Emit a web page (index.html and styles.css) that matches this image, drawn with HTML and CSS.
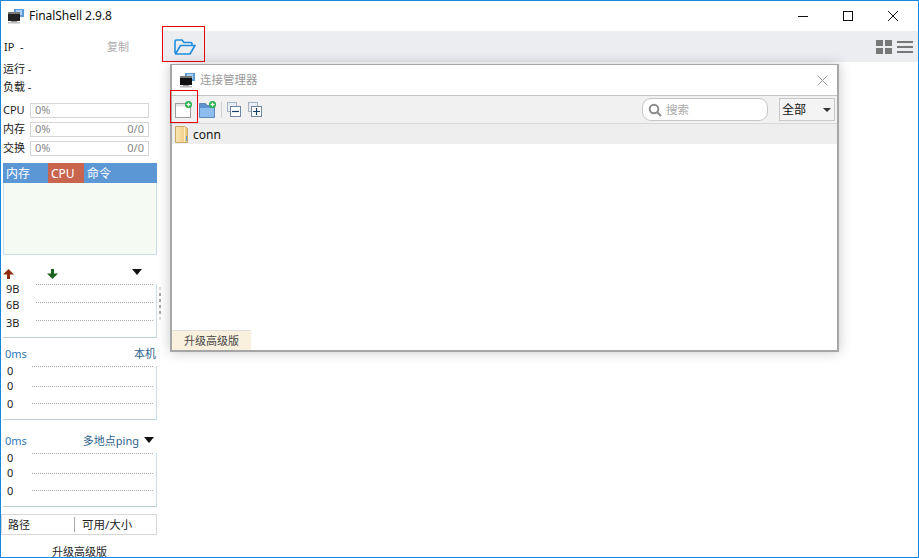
FILE: index.html
```html
<!DOCTYPE html>
<html lang="zh">
<head>
<meta charset="utf-8">
<title>FinalShell 2.9.8</title>
<link rel="stylesheet" href="styles.css">
</head>
<body>
<div class="window">
  <header class="titlebar">
    <svg class="app-icon" width="17" height="15" viewBox="0 0 17 15"><rect x="7" y="0" width="10" height="8" fill="#5b9bd8"/><rect x="9" y="1" width="6" height="5" fill="#a9d0f2"/><rect x="1" y="3" width="12" height="9" fill="#222"/><rect x="1" y="3" width="12" height="2" fill="#777"/><rect x="4" y="12" width="6" height="1" fill="#999"/><rect x="1" y="13" width="12" height="1.500" fill="#bbb"/></svg>
    <span class="app-title">FinalShell 2.9.8</span>
    <div class="win-controls">
      <svg width="12" height="12" viewBox="0 0 12 12"><path d="M1 6.500h10" stroke="#111" fill="none"/></svg>
      <svg width="12" height="12" viewBox="0 0 12 12"><rect x="1.500" y="1.500" width="9" height="9" stroke="#111" fill="none"/></svg>
      <svg width="12" height="12" viewBox="0 0 12 12"><path d="M1 1l10 10M11 1L1 11" stroke="#111" fill="none"/></svg>
    </div>
  </header>
  <div class="main">
    <aside class="sidebar">
      <div class="row ip-row"><span>IP&nbsp;&nbsp;-</span><span class="copy">复制</span></div>
      <div class="row info-row">运行 -</div>
      <div class="row info-row">负载 -</div>
      <div class="meters">
        <div class="meter"><span class="meter-label">CPU</span><div class="bar"><span>0%</span></div></div>
        <div class="meter"><span class="meter-label">内存</span><div class="bar"><span>0%</span><span>0/0</span></div></div>
        <div class="meter"><span class="meter-label">交换</span><div class="bar"><span>0%</span><span>0/0</span></div></div>
      </div>
      <section class="proc">
        <div class="proc-tabs"><span class="tab tab-mem">内存</span><span class="tab tab-cpu">CPU</span><span class="tab">命令</span></div>
        <div class="proc-body"></div>
      </section>
      <div class="net-head">
        <svg width="11" height="10" viewBox="0 0 11 10"><path d="M5.500 0L11 5.500H7V10H4V5.500H0z" fill="#8f2f10"/></svg>
        <svg class="arrow-down" width="11" height="10" viewBox="0 0 11 10"><path d="M5.500 10L11 4.500H7V0H4V4.500H0z" fill="#1d6320"/></svg>
        <svg class="caret" width="10" height="6" viewBox="0 0 10 6"><path d="M0 0h10L5 6z" fill="#111"/></svg>
      </div>
      <div class="chart chart-net">
        <div class="tick"><span>9B</span><i></i></div>
        <div class="tick"><span>6B</span><i></i></div>
        <div class="tick"><span>3B</span><i></i></div>
      </div>
      <div class="ping-head first"><span class="ms">0ms</span><span class="ping-name">本机</span></div>
      <div class="chart chart-ping">
        <div class="tick"><span>0</span><i></i></div>
        <div class="tick"><span>0</span><i></i></div>
        <div class="tick"><span>0</span><i></i></div>
      </div>
      <div class="ping-head second"><span class="ms">0ms</span><span class="ping-name">多地点ping<svg class="caret-ping" width="10" height="6" viewBox="0 0 10 6"><path d="M0 0h10L5 6z" fill="#111"/></svg></span></div>
      <div class="chart chart-ping">
        <div class="tick"><span>0</span><i></i></div>
        <div class="tick"><span>0</span><i></i></div>
        <div class="tick"><span>0</span><i></i></div>
      </div>
      <div class="disk-head"><span class="disk-path">路径</span><span class="disk-size">可用/大小</span></div>
      <div class="upgrade-side">升级高级版</div>
    </aside>
    <div class="splitter"><i class="faint"></i><i></i><i></i><i></i><i></i><i class="faint"></i></div>
    <main class="content">
      <div class="toolbar">
        <svg class="open-folder" width="22" height="16" viewBox="0 0 22 16"><path d="M1 14V2.500Q1 1 2.500 1H8l2 2.500h7Q18 3.500 18 5V6.500H6.500L1.500 15h14.500l5-8.500H18" fill="none" stroke="#1f8ee0" stroke-width="1.600" stroke-linejoin="round"/></svg>
        <div class="view-icons">
          <svg width="16" height="14" viewBox="0 0 16 14"><path d="M0 0h7v6H0zM9 0h7v6H9zM0 8h7v6H0zM9 8h7v6H9z" fill="#777"/></svg>
          <svg width="16" height="14" viewBox="0 0 16 14"><path d="M0 1h16v2H0zM0 6h16v2H0zM0 11h16v2H0z" fill="#777"/></svg>
        </div>
      </div>
    </main>
  </div>

  <div class="highlight hl-open"></div>

  <section class="dialog">
    <div class="dlg-title">
      <svg width="17" height="15" viewBox="0 0 17 15"><rect x="6" y="0" width="10" height="8" fill="#5b9bd8"/><rect x="8" y="1" width="6" height="5" fill="#a9d0f2"/><rect x="1" y="3" width="12" height="9" fill="#111"/><rect x="1" y="3" width="12" height="2" fill="#777"/><rect x="4" y="12" width="6" height="1" fill="#999"/><rect x="1" y="13" width="12" height="1.500" fill="#bbb"/></svg>
      <span class="dlg-name">连接管理器</span>
      <svg class="dlg-close" width="13" height="13" viewBox="0 0 13 13"><path d="M1.500 1.500l10 10M11.500 1.500l-10 10" stroke="#9a9a9a" fill="none"/></svg>
    </div>
    <div class="dlg-tools">
      <svg width="17" height="17" viewBox="0 0 17 17"><rect x="0.500" y="2.500" width="15" height="14" fill="#fff" stroke="#9e9e9e"/><rect x="1" y="3" width="14" height="2.500" fill="#e6e6e6"/><circle cx="13.500" cy="3.500" r="3.500" fill="#22ad42"/><path d="M11.500 3.500h4M13.500 1.500v4" stroke="#fff" stroke-width="1.300"/></svg>
      <svg class="tool-folder" width="17" height="17" viewBox="0 0 17 17"><path d="M0.500 2.500h6l1.500 2h7.500v12H0.500z" fill="#5f93cd" stroke="#5b89bb"/><path d="M1 7h14v9H1z" fill="#8cbdee"/><circle cx="13.500" cy="3.500" r="3.500" fill="#22ad42"/><path d="M11.500 3.500h4M13.500 1.500v4" stroke="#fff" stroke-width="1.300"/></svg>
      <span class="tool-sep"></span>
      <svg class="tree-btn" width="14" height="15" viewBox="0 0 14 15"><rect x="0.500" y="0.500" width="9" height="9" fill="#e9eef4" stroke="#a4b2c4"/><rect x="3.500" y="4.500" width="10" height="10" fill="#fff" stroke="#7084a3"/><path d="M5 9.500h7" stroke="#163f6b" stroke-width="1.200"/></svg>
      <svg class="tree-btn" width="14" height="15" viewBox="0 0 14 15"><rect x="0.500" y="0.500" width="9" height="9" fill="#e9eef4" stroke="#a4b2c4"/><rect x="3.500" y="4.500" width="10" height="10" fill="#fff" stroke="#7084a3"/><path d="M5 9.500h7M8.500 6v7" stroke="#163f6b" stroke-width="1.200"/></svg>
      <div class="search">
        <svg width="14" height="14" viewBox="0 0 14 14"><circle cx="6" cy="6" r="4.300" fill="none" stroke="#8c8c8c" stroke-width="2"/><path d="M9 9l4 4" stroke="#8c8c8c" stroke-width="2.200"/></svg>
        <span>搜索</span>
      </div>
      <div class="select"><span>全部</span><svg width="8" height="4" viewBox="0 0 8 4"><path d="M0 0h8L4 4z" fill="#333"/></svg></div>
    </div>
    <div class="dlg-list">
      <div class="list-row">
        <svg width="14" height="17" viewBox="0 0 14 17"><defs><linearGradient id="fold" x1="0" y1="0" x2="1" y2="0"><stop offset="0" stop-color="#f9e6b4"/><stop offset="1" stop-color="#efc77a"/></linearGradient></defs><path d="M0.500 0.500h9l3 2v14h-12z" fill="url(#fold)" stroke="#c9a868"/><path d="M9.500 1v15" stroke="#fdf0c8"/><path d="M11.500 10v5" stroke="#5b9bd8"/></svg>
        <span class="conn-name">conn</span>
      </div>
    </div>
    <div class="dlg-foot"><span class="upgrade-tab">升级高级版</span></div>
  </section>

  <div class="highlight hl-new"></div>
</div>
</body>
</html>
```

FILE: styles.css
```css
* { box-sizing: border-box; }
html, body { margin: 0; height: 100%; overflow: hidden; background: #fff; }
body { font: 12px/16px "Noto Sans", "Noto Sans CJK SC", sans-serif; color: #222; }

.window {
  position: relative;
  width: 919px;
  height: 558px;
  border: 1px solid #1688de;
  overflow: hidden;
  background: #fff;
}

.titlebar { height: 30px; display: flex; align-items: center; padding-left: 6px; }
.app-icon { margin-right: 5px; }
.app-title { font-size: 12px; color: #111; letter-spacing: -0.05px; }
.win-controls { margin-left: auto; display: flex; gap: 33px; padding-right: 19px; }

.main { display: flex; height: 526px; }

.sidebar { width: 157px; flex: none; font-size: 11px; color: #222; padding-top: 8px; }
.row { display: flex; padding-left: 3px; height: 18px; align-items: center; }
.ip-row { height: 16px; justify-content: space-between; padding-right: 29px; }
.copy { color: #aaa; }
.info-row { margin-top: 5px; height: 18px; padding-left: 2px; }
.info-row + .info-row { margin-top: 0; }

.meters { margin-top: 6px; display: flex; flex-direction: column; gap: 3px; }
.meter { display: flex; align-items: center; height: 16px; padding-left: 2px; }
.meter-label { width: 27px; flex: none; }
.bar {
  width: 119px; height: 15px;
  border: 1px solid #d6d6d6;
  padding: 0 4px;
  display: flex; justify-content: space-between; align-items: center;
  color: #888;
  font-size: 11px;
}

.proc { margin: 7px 0 0 2px; width: 154px; }
.proc-tabs { height: 20px; background: #5b97d5; display: flex; color: #fff; line-height: 21px; font-size: 12px; }
.tab { padding-left: 3px; }
.tab-mem { width: 45px; }
.tab-cpu { width: 36px; background: #c9654f; }
.proc-body { height: 72px; background: #f5faf3; border: 1px solid #c8dfec; border-top: 0; }

.net-head { margin: 10px 0 3px 2px; padding-top: 2px; width: 154px; height: 16px; display: flex; align-items: center; }
.arrow-down { margin-left: 33px; }
.caret { margin-left: 74px; margin-top: -5px; }

.chart {
  margin-left: 2px; width: 154px; height: 54px;
  border-right: 1px solid #c8dfec;
  border-bottom: 1px solid #bcd0d8;
  padding-left: 3px;
  font-size: 11px;
}
.tick { display: flex; height: 18px; align-items: flex-start; }
.tick span { width: 30px; line-height: 14px; margin-top: -4px; }
.tick:first-child span { margin-top: -2px; }
.tick i { flex: 1; height: 0; border-top: 1px dotted #aaa; margin-right: 3px; }
.chart-ping { padding-left: 4px; }
.chart-ping .tick span { width: 25px; }
.chart-ping .tick:nth-child(1) { height: 20px; }
.chart-ping .tick:nth-child(2) { height: 17px; }
.chart-ping .tick:nth-child(2) span { margin-top: -7px; }
.chart-ping .tick:nth-child(3) span { margin-top: -6px; }

.ping-head { margin: 8px 0 4px 4px; width: 151px; height: 16px; display: flex; justify-content: space-between; align-items: center; font-size: 11px; color: #2d5f8e; }
.ping-head.second { margin-top: 13px; }
.ms { color: #2f78bd; }
.caret-ping { margin: 0 2px 2px 5px; }

.disk-head {
  margin-top: 7px; width: 156px; height: 21px;
  border: 1px solid #d8d8d8;
  display: flex; align-items: center;
  font-size: 11px;
}
.disk-path { width: 73px; padding-left: 6px; border-right: 1px solid #aaa; height: 15px; line-height: 15px; }
.disk-size { padding-left: 7px; font-size: 11.500px; }
.upgrade-side { margin-top: 9px; text-align: center; font-size: 11px; line-height: 16px; }

.splitter { width: 4px; flex: none; display: flex; flex-direction: column; gap: 3px; padding: 256px 0 0 1px; }
.splitter i { width: 2px; height: 3px; background: #a9a9a9; }
.splitter .faint { background: #dedede; }

.content { flex: 1; }
.toolbar {
  height: 31px; background: #ecedf0;
  display: flex; align-items: center; justify-content: space-between;
  padding: 0 5px 0 12px;
}
.view-icons { display: flex; gap: 5px; }

.highlight { position: absolute; border: 1px solid #e8000b; pointer-events: none; }
.hl-open { left: 161px; top: 25px; width: 43px; height: 36px; }
.hl-new { left: 169px; top: 89px; width: 28px; height: 33px; }

.dialog {
  position: absolute;
  left: 169px; top: 63px;
  width: 669px; height: 288px;
  background: #fff;
  border: 2px solid #a6a6a6;
  border-width: 1px 2px 2px 2px;
  box-shadow: 0 0 12px rgba(0,0,0,.22);
  display: flex; flex-direction: column;
}
.dlg-title { height: 31px; flex: none; display: flex; align-items: center; padding: 0 8px 0 7px; border-bottom: 1px solid #c4c4c4; }
.dlg-name { margin-left: 4px; color: #9a9a9a; font-size: 11.500px; }
.dlg-close { margin-left: auto; }
.dlg-tools { height: 28px; flex: none; background: #f1f1f1; border-bottom: 1px solid #d8d8d8; display: flex; align-items: center; padding: 0 2px 0 3px; }
.tool-folder { margin-left: 7px; }
.tool-sep { width: 1px; height: 16px; background: #d0d0d0; margin: 0 5px; }
.tree-btn + .tree-btn { margin-left: 7px; }
.search {
  margin-left: auto; width: 126px; height: 23px;
  border: 1px solid #c6c6c6; border-radius: 9px;
  background: #fff;
  display: flex; align-items: center; gap: 4px; padding-left: 5px;
  color: #aaa; font-size: 11.500px;
}
.select {
  margin-left: 11px; width: 56px; height: 23px;
  border: 1px solid #c8c8c8; background: #f4f4f4;
  display: flex; align-items: center; justify-content: space-between;
  padding: 0 3px 0 2px;
  color: #111; font-size: 12px;
}
.dlg-list { flex: 1; }
.list-row { height: 20px; background: #eeeeee; display: flex; align-items: center; gap: 4px; padding-left: 3px; font-size: 12px; color: #111; }
.conn-name { padding-top: 1px; }
.dlg-foot { height: 20px; flex: none; }
.upgrade-tab { display: block; width: 79px; height: 20px; line-height: 20px; background: #faf0de; border-top: 1px solid #dedede; text-align: center; font-size: 11px; color: #444; }
```
